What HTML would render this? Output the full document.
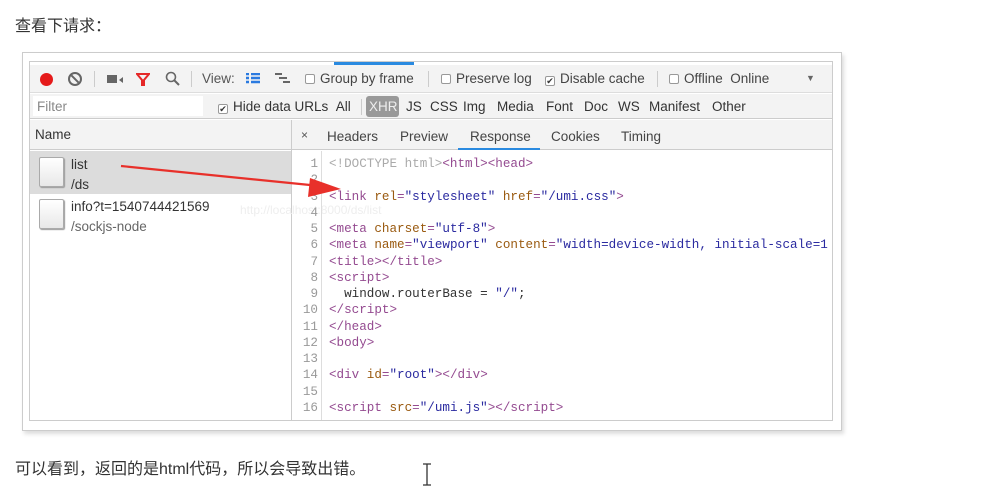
<!DOCTYPE html>
<html><head><meta charset="utf-8"><style>
*{margin:0;padding:0;box-sizing:border-box}
body{width:994px;height:486px;background:#fff;position:relative;overflow:hidden;font-family:"Liberation Sans","Noto Sans CJK SC",sans-serif;color:#333}
.a{position:absolute;white-space:nowrap}
.t{font-size:13.5px;color:#333}
.code{font-family:"Liberation Mono",monospace;font-size:12.6px;line-height:16.25px}
.tag{color:#944a90}.at{color:#9a5a10}.v{color:#2a2aa0}.g{color:#aaa}
.cb{display:inline-block;width:10px;height:10px;border:1px solid #999;border-radius:2px;background:#fff;vertical-align:-1px;margin-right:5px;font-size:9px;line-height:8px;text-align:center;color:#333}
.sep{position:absolute;width:1px;background:#ccc}
</style></head><body>
<div class="a" style="left:15px;top:12px;font-size:16px;color:#333">查看下请求：</div>
<div class="a" style="left:22px;top:52px;width:820px;height:379px;border:1px solid #ccc;background:#fff;box-shadow:2px 3px 4px #ddd"></div>
<div class="a" style="left:29px;top:61px;width:804px;height:360px;border:1px solid #ccc;background:#fff"></div>
<div class="a" style="left:334px;top:62px;width:80px;height:3px;background:#2a8ae0"></div>
<!-- toolbar -->
<div class="a" style="left:30px;top:65px;width:802px;height:28px;background:#f3f3f3;border-bottom:1px solid #ddd"></div>
<div class="a" style="left:40px;top:73px;width:13px;height:13px;border-radius:50%;background:#e51a1a"></div>
<div class="a" style="left:68px;top:72px;width:14px;height:14px;border-radius:50%;border:2px solid #666"></div>
<div class="a" style="left:70px;top:78px;width:10px;height:2px;background:#666;transform:rotate(45deg)"></div>
<div class="sep" style="left:94px;top:71px;height:16px"></div>
<div class="a" style="left:107px;top:75px;width:10px;height:8px;background:#666"></div>
<div class="a" style="left:116px;top:77px;width:0;height:0;border:3px solid transparent;border-right:4px solid #666"></div>
<svg class="a" style="left:136px;top:72px" width="14" height="14"><path d="M1 2h12L8 8v5H6V8z" fill="none" stroke="#e52828" stroke-width="2"/></svg>
<svg class="a" style="left:165px;top:71px" width="15" height="15"><circle cx="6" cy="6" r="4.5" fill="none" stroke="#666" stroke-width="1.6"/><path d="M9 9l5 5" stroke="#666" stroke-width="2"/></svg>
<div class="sep" style="left:191px;top:71px;height:16px"></div>
<div class="a t" style="left:202px;top:71px;color:#555">View:</div>
<svg class="a" style="left:246px;top:73px" width="14" height="12"><path d="M0 1h3M5 1h9M0 5h3M5 5h9M0 9h3M5 9h9" stroke="#2a7ae0" stroke-width="2.4"/></svg>
<svg class="a" style="left:275px;top:73px" width="16" height="12"><path d="M0 1h7M4 5h8M8 9h7" stroke="#666" stroke-width="2"/></svg>
<div class="a t" style="left:305px;top:71px;color:#444"><span class="cb"></span>Group by frame</div>
<div class="sep" style="left:428px;top:71px;height:16px"></div>
<div class="a t" style="left:441px;top:71px;color:#444"><span class="cb"></span>Preserve log</div>
<div class="a t" style="left:545px;top:71px;color:#444"><span class="cb">✔</span>Disable cache</div>
<div class="sep" style="left:657px;top:71px;height:16px"></div>
<div class="a t" style="left:669px;top:71px;color:#444"><span class="cb"></span>Offline&nbsp;&nbsp;Online</div>
<div class="a" style="left:806px;top:73px;font-size:9px;color:#666">▼</div>
<!-- filter row -->
<div class="a" style="left:30px;top:94px;width:802px;height:25px;background:#f3f3f3;border-bottom:1px solid #ccc"></div>
<div class="a" style="left:33px;top:96px;width:170px;height:20px;background:#fff"></div>
<div class="a t" style="left:37px;top:99px;color:#888">Filter</div>
<div class="a t" style="left:218px;top:99px;color:#333"><span class="cb">✔</span>Hide data URLs&nbsp;&nbsp;All</div>
<div class="sep" style="left:361px;top:99px;height:16px"></div>
<div class="a" style="left:366px;top:96px;width:33px;height:21px;background:#999;border-radius:3px"></div>
<div class="a t" style="left:369px;top:99px;color:#eee">XHR</div>
<div class="a t" style="left:406px;top:99px">JS</div>
<div class="a t" style="left:430px;top:99px">CSS</div>
<div class="a t" style="left:463px;top:99px">Img</div>
<div class="a t" style="left:497px;top:99px">Media</div>
<div class="a t" style="left:546px;top:99px">Font</div>
<div class="a t" style="left:584px;top:99px">Doc</div>
<div class="a t" style="left:618px;top:99px">WS</div>
<div class="a t" style="left:649px;top:99px">Manifest</div>
<div class="a t" style="left:712px;top:99px">Other</div>
<!-- left pane -->
<div class="a" style="left:30px;top:120px;width:262px;height:30px;background:#f3f3f3;border-bottom:1px solid #ccc;border-right:1px solid #ccc"></div>
<div class="a t" style="left:35px;top:127px;color:#333">Name</div>
<div class="a" style="left:30px;top:151px;width:262px;height:43px;background:#dcdcdc"></div>
<div class="a" style="left:291px;top:120px;width:1px;height:300px;background:#ccc"></div>
<div class="a" style="left:39px;top:157px;width:25px;height:30px;border:1px solid #aaa;border-radius:2px;background:linear-gradient(#fff,#e8e8e8);box-shadow:1px 1px 1px #999"></div>
<div class="a t" style="left:71px;top:155px;line-height:20px">list<br>/ds</div>
<div class="a" style="left:39px;top:199px;width:25px;height:30px;border:1px solid #aaa;border-radius:2px;background:linear-gradient(#fff,#e8e8e8);box-shadow:1px 1px 1px #999"></div>
<div class="a t" style="left:71px;top:197px;line-height:20px">info?t=1540744421569<br><span style="color:#666">/sockjs-node</span></div>
<div class="a" style="left:240px;top:203px;font-size:12px;color:#eee">http://localhost:8000/ds/list</div>
<!-- tabs -->
<div class="a" style="left:292px;top:120px;width:540px;height:30px;background:#f3f3f3;border-bottom:1px solid #ccc"></div>
<div class="a t" style="left:301px;top:128px;color:#555;font-size:12px">×</div>
<div class="a t" style="left:327px;top:129px;color:#444">Headers</div>
<div class="a t" style="left:400px;top:129px;color:#444">Preview</div>
<div class="a t" style="left:470px;top:129px;color:#444">Response</div>
<div class="a t" style="left:551px;top:129px;color:#444">Cookies</div>
<div class="a t" style="left:621px;top:129px;color:#444">Timing</div>
<div class="a" style="left:458px;top:148px;width:82px;height:2px;background:#2a8ae0"></div>
<!-- code -->
<div class="a" style="left:321px;top:151px;width:1px;height:269px;background:#ddd"></div>
<div class="a code" style="left:296px;top:156px;width:22px;text-align:right;color:#999">1<br>2<br>3<br>4<br>5<br>6<br>7<br>8<br>9<br>10<br>11<br>12<br>13<br>14<br>15<br>16</div>
<div class="a code" style="left:329px;top:156px;width:503px;overflow:hidden;height:263px"><span class="g">&lt;!DOCTYPE html&gt;</span><span class="tag">&lt;html&gt;&lt;head&gt;</span><br><br><span class="tag">&lt;link </span><span class="at">rel</span><span class="tag">=</span><span class="v">"stylesheet"</span> <span class="at">href</span><span class="tag">=</span><span class="v">"/umi.css"</span><span class="tag">&gt;</span><br><br><span class="tag">&lt;meta </span><span class="at">charset</span><span class="tag">=</span><span class="v">"utf-8"</span><span class="tag">&gt;</span><br><span class="tag">&lt;meta </span><span class="at">name</span><span class="tag">=</span><span class="v">"viewport"</span> <span class="at">content</span><span class="tag">=</span><span class="v">"width=device-width, initial-scale=1</span><br><span class="tag">&lt;title&gt;&lt;/title&gt;</span><br><span class="tag">&lt;script&gt;</span><br><span style="color:#333">&nbsp;&nbsp;window.routerBase = </span><span class="v">"/"</span>;<br><span class="tag">&lt;/script&gt;</span><br><span class="tag">&lt;/head&gt;</span><br><span class="tag">&lt;body&gt;</span><br><br><span class="tag">&lt;div </span><span class="at">id</span><span class="tag">=</span><span class="v">"root"</span><span class="tag">&gt;&lt;/div&gt;</span><br><br><span class="tag">&lt;script </span><span class="at">src</span><span class="tag">=</span><span class="v">"/umi.js"</span><span class="tag">&gt;&lt;/script&gt;</span></div>
<!-- arrow -->
<svg class="a" style="left:0;top:0" width="994" height="486"><path d="M121 166L320 186" stroke="#e8302a" stroke-width="2.2"/><path d="M341 189L310 178L308 197z" fill="#e8302a"/></svg>
<div class="a" style="left:15px;top:455px;font-size:16px;color:#333">可以看到，返回的是html代码，所以会导致出错。</div>
<svg class="a" style="left:421px;top:463px" width="12" height="23"><path d="M2 1h8M6 1v21M2 22h8" stroke="#333" stroke-width="1.3" fill="none"/></svg>
</body></html>
